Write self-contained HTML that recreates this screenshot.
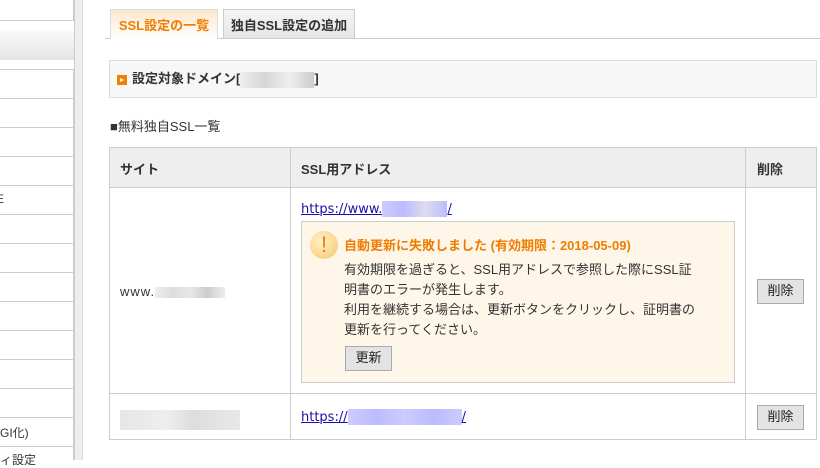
<!DOCTYPE html>
<html><head><meta charset="utf-8"><style>
*{margin:0;padding:0;box-sizing:border-box}
body{width:820px;height:460px;overflow:hidden;background:#fff;font-family:"Liberation Sans","Noto Sans CJK JP",sans-serif;font-size:13px;color:#333;position:relative}
.a{position:absolute}
.row{position:absolute;left:0;width:74px;height:1px;background:#ccc}
.btn{position:absolute;background:#e3e3e3;border:1px solid #aaa;font-size:13px;text-align:center;line-height:22px;color:#222}
.blur{display:inline-block;vertical-align:middle}
a{color:#1a0dab;text-decoration:underline}
</style></head><body>
<div class="a" style="left:0;top:0;width:74px;height:21px;border:1px solid #ccc;border-left:none;border-top:none"></div>
<div class="a" style="left:0;top:30px;width:83px;height:30px;background:linear-gradient(#fafafa,#e4e4e4)"></div>
<div class="a" style="left:74px;top:0;width:9px;height:460px;background:#eee;border-left:1px solid #ccc;border-right:1px solid #ddd"></div>
<div class="a" style="left:0;top:69px;width:74px;height:391px;border-right:1px solid #ccc"></div>
<div class="row" style="top:69px"></div><div class="row" style="top:98px"></div><div class="row" style="top:127px"></div><div class="row" style="top:156px"></div><div class="row" style="top:185px"></div><div class="row" style="top:214px"></div><div class="row" style="top:243px"></div><div class="row" style="top:272px"></div><div class="row" style="top:301px"></div><div class="row" style="top:330px"></div><div class="row" style="top:359px"></div><div class="row" style="top:388px"></div><div class="row" style="top:417px"></div><div class="row" style="top:446px"></div>
<div class="a" style="left:-4px;top:192px;font-size:12px">E</div>
<div class="a" style="left:0;top:424px;font-size:12px">GI化)</div>
<div class="a" style="left:0;top:451px;font-size:12px;color:#333">ィ設定</div>

<div class="a" style="left:105px;top:38px;width:715px;height:1px;background:#ccc"></div>
<div class="a" style="left:110px;top:9px;width:108px;height:30px;background:linear-gradient(#fde6cc,#fff);border:1px solid #ddd;border-bottom:none;color:#f07d00;font-weight:bold;text-align:center;line-height:32px">SSL設定の一覧</div>
<div class="a" style="left:223px;top:9px;width:132px;height:29px;background:linear-gradient(#f4f4f4,#e6e6e6);border:1px solid #ccc;border-bottom:none;font-weight:bold;text-align:center;line-height:31px;color:#333">独自SSL設定の追加</div>

<div class="a" style="left:109px;top:60px;width:708px;height:38px;background:#f7f7f7;border:1px solid #ddd"></div>
<div class="a" style="left:117px;top:75px;width:10px;height:10px;background:#f08000"></div>
<div class="a" style="left:120px;top:78px;width:0;height:0;border-left:4px solid #fff;border-top:2px solid transparent;border-bottom:2px solid transparent"></div>
<div class="a" style="left:132px;top:70px;font-weight:bold;line-height:18px">設定対象ドメイン[<span class="blur" style="width:74px;height:16px;background:linear-gradient(90deg,#eee,#d6d6d6,#eee,#ccc)"></span>]</div>

<div class="a" style="left:110px;top:119px;line-height:16px">■無料独自SSL一覧</div>

<div class="a" style="left:109px;top:147px;width:708px;height:293px;border:1px solid #ccc"></div>
<div class="a" style="left:110px;top:148px;width:706px;height:40px;background:#eee;border-bottom:1px solid #ccc"></div>
<div class="a" style="left:290px;top:148px;width:1px;height:291px;background:#ccc"></div>
<div class="a" style="left:745px;top:148px;width:1px;height:291px;background:#ccc"></div>
<div class="a" style="left:110px;top:393px;width:706px;height:1px;background:#ccc"></div>
<div class="a" style="left:120px;top:159px;font-weight:bold">サイト</div>
<div class="a" style="left:301px;top:159px;font-weight:bold">SSL用アドレス</div>
<div class="a" style="left:757px;top:159px;font-weight:bold">削除</div>

<div class="a" style="left:120px;top:284px;letter-spacing:1px">www.<span class="blur" style="width:70px;height:11px;background:linear-gradient(90deg,#eee,#ddd,#e8e8e8,#ccc,#eee)"></span></div>
<div class="a" style="left:120px;top:410px;width:120px;height:20px;background:linear-gradient(90deg,#e6e6e6,#eee 40%,#ddd 60%,#e8e8e8)"></div>

<div class="a" style="left:301px;top:201px;font-family:'DejaVu Sans',sans-serif;font-size:13px"><a>https://www.<span class="blur" style="width:65px;height:16px;background:linear-gradient(90deg,#ccf,#bbf,#dde,#bbf)"></span>/</a></div>
<div class="a" style="left:301px;top:221px;width:434px;height:162px;background:#fef7e9;border:1px solid #ccc"></div>
<div class="a" style="left:310px;top:231px;width:28px;height:28px;border-radius:50%;background:radial-gradient(circle at 40% 35%,#fff1c8,#f7c66a);color:#f08000;text-align:center;font-size:22px;line-height:28px">!</div>
<div class="a" style="left:344px;top:235px;color:#f07d00;font-weight:bold;font-size:13px">自動更新に失敗しました (有効期限：2018-05-09)</div>
<div class="a" style="left:344px;top:260px;line-height:20px;width:380px">有効期限を過ぎると、SSL用アドレスで参照した際にSSL証<br>明書のエラーが発生します。<br>利用を継続する場合は、更新ボタンをクリックし、証明書の<br>更新を行ってください。</div>
<div class="btn" style="left:345px;top:346px;width:47px;height:25px">更新</div>
<div class="btn" style="left:757px;top:279px;width:47px;height:25px">削除</div>
<div class="a" style="left:301px;top:409px;font-family:'DejaVu Sans',sans-serif"><a>https://<span class="blur" style="width:114px;height:16px;background:linear-gradient(90deg,#ccf,#bbf,#ccf,#bbf,#ccf)"></span>/</a></div>
<div class="btn" style="left:757px;top:405px;width:47px;height:25px">削除</div>
</body></html>
